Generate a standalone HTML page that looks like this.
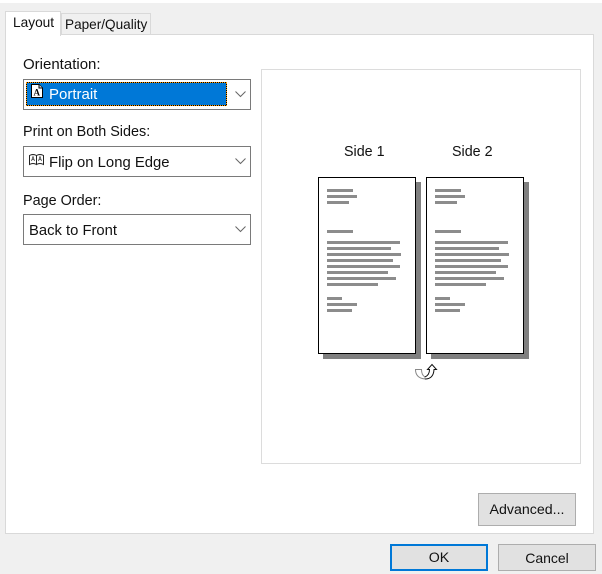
<!DOCTYPE html>
<html><head><meta charset="utf-8"><style>
html,body{margin:0;padding:0}
body{width:602px;height:574px;background:#f0f0f0;position:relative;overflow:hidden;font-family:"Liberation Sans",sans-serif;font-size:14.6px;color:#111}
div,span.t{position:absolute;box-sizing:border-box}
.t{white-space:nowrap;line-height:18px}
.combo{left:23px;width:228px;height:31px;background:#fff;border:1px solid #7a7a7a}
.chev{position:absolute;left:235px}
.btn{background:#e1e1e1;border:1px solid #adadad;text-align:center;line-height:31px}
.pg{width:98px;height:177px;background:#fff;border:1px solid #000;top:177px;box-shadow:5px 5px 0 #808080}
.l{height:3px;background:#8c8c8c;left:8px}
</style></head><body>
<div style="left:0;top:0;width:602px;height:3px;background:#fff"></div>
<div style="left:5px;top:34px;width:589px;height:500px;background:#fff;border:1px solid #d9d9d9"></div>
<div style="left:61px;top:13px;width:90px;height:22px;background:#f0f0f0;border:1px solid #d9d9d9"></div>
<div style="left:5px;top:11px;width:56px;height:25px;background:#fff;border:1px solid #d9d9d9;border-bottom:0"></div>
<span class="t" style="left:13px;top:14px;font-size:13.7px">Layout</span>
<span class="t" style="left:65px;top:16px;font-size:13.6px">Paper/Quality</span>

<span class="t" style="left:23px;top:56px;font-size:15px">Orientation:</span>
<div class="combo" style="top:79px"></div>
<div style="left:26px;top:82px;width:201px;height:24px;background:#000;border:1px dotted #f90"><div style="left:0;top:0;right:0;bottom:0;background:#0078d7"></div></div>
<svg style="position:absolute;left:30px;top:84px" width="15" height="16"><path d="M1.500 .5H9L12.500 4V13.500H1.500Z" fill="#fff" stroke="#000"/><path d="M9 .5V4H12.500" fill="#ddd" stroke="#000"/><text x="3.500" y="11.500" font-family="Liberation Serif" font-weight="bold" font-size="9" fill="#000">A</text></svg>
<span class="t" style="left:49px;top:86px;color:#fff;font-size:15px">Portrait</span>
<svg class="chev" style="top:91px" width="11" height="7"><path d="M.5 .5L5.500 5.500L10.500 .5" fill="none" stroke="#666"/></svg>

<span class="t" style="left:23px;top:123px;font-size:14.4px">Print on Both Sides:</span>
<div class="combo" style="top:146px"></div>
<svg style="position:absolute;left:29px;top:153px" width="16" height="13"><path d="M.5 11.500V2.500Q4 .5 7.500 2.500V11.500Q4 9.500 .5 11.500ZM7.500 2.500Q11 .5 14.500 2.500V11.500Q11 9.500 7.500 11.500" fill="#fff" stroke="#222"/><path d="M2.500 8L4 3.500L5.500 8M3 6.500H5M9.500 8L11 3.500L12.500 8M10 6.500H12" fill="none" stroke="#444" stroke-width=".8"/></svg>
<span class="t" style="left:49px;top:154px;font-size:14.85px">Flip on Long Edge</span>
<svg class="chev" style="top:158px" width="11" height="7"><path d="M.5 .5L5.500 5.500L10.500 .5" fill="none" stroke="#666"/></svg>

<span class="t" style="left:23px;top:192px;font-size:14.4px">Page Order:</span>
<div class="combo" style="top:214px"></div>
<span class="t" style="left:29px;top:222px;font-size:14.8px">Back to Front</span>
<svg class="chev" style="top:226px" width="11" height="7"><path d="M.5 .5L5.500 5.500L10.500 .5" fill="none" stroke="#666"/></svg>

<div style="left:261px;top:69px;width:320px;height:395px;background:#fff;border:1px solid #dcdcdc"></div>
<span class="t" style="left:344px;top:143px;font-size:14.3px">Side 1</span>
<span class="t" style="left:452px;top:143px;font-size:14.3px">Side 2</span>

<div class="pg" style="left:318px">
<div class="l" style="top:11px;width:26px"></div><div class="l" style="top:17px;width:30px"></div><div class="l" style="top:23px;width:22px"></div><div class="l" style="top:52px;width:26px"></div><div class="l" style="top:63px;width:73px"></div><div class="l" style="top:69px;width:64px"></div><div class="l" style="top:75px;width:74px"></div><div class="l" style="top:81px;width:66px"></div><div class="l" style="top:87px;width:73px"></div><div class="l" style="top:93px;width:61px"></div><div class="l" style="top:99px;width:69px"></div><div class="l" style="top:105px;width:51px"></div><div class="l" style="top:119px;width:15px"></div><div class="l" style="top:125px;width:30px"></div><div class="l" style="top:131px;width:25px"></div>
</div>
<div class="pg" style="left:426px">
<div class="l" style="top:11px;width:26px"></div><div class="l" style="top:17px;width:30px"></div><div class="l" style="top:23px;width:22px"></div><div class="l" style="top:52px;width:26px"></div><div class="l" style="top:63px;width:73px"></div><div class="l" style="top:69px;width:64px"></div><div class="l" style="top:75px;width:74px"></div><div class="l" style="top:81px;width:66px"></div><div class="l" style="top:87px;width:73px"></div><div class="l" style="top:93px;width:61px"></div><div class="l" style="top:99px;width:69px"></div><div class="l" style="top:105px;width:51px"></div><div class="l" style="top:119px;width:15px"></div><div class="l" style="top:125px;width:30px"></div><div class="l" style="top:131px;width:25px"></div>
</div>
<svg style="position:absolute;left:414px;top:362px" width="26" height="20"><path d="M1.500 7.500H7.500Q7.500 13 11 15V17Q1.500 16 1.500 7.500Z" fill="#fff" stroke="#888"/><path d="M11 17Q19.500 17 20 7.500H22.500L18 2.500L13.500 7.500H15.500Q15.500 13 11 15" fill="#fff" stroke="#111"/></svg>

<div class="btn" style="left:478px;top:493px;width:98px;height:33px;font-size:14.2px;line-height:33px">Advanced...</div>
<div class="btn" style="left:390px;top:544px;width:98px;height:27px;border:2px solid #0078d7;line-height:24px;font-size:14.2px">OK</div>
<div class="btn" style="left:498px;top:544px;width:98px;height:27px;line-height:26px;font-size:14px">Cancel</div>
</body></html>
